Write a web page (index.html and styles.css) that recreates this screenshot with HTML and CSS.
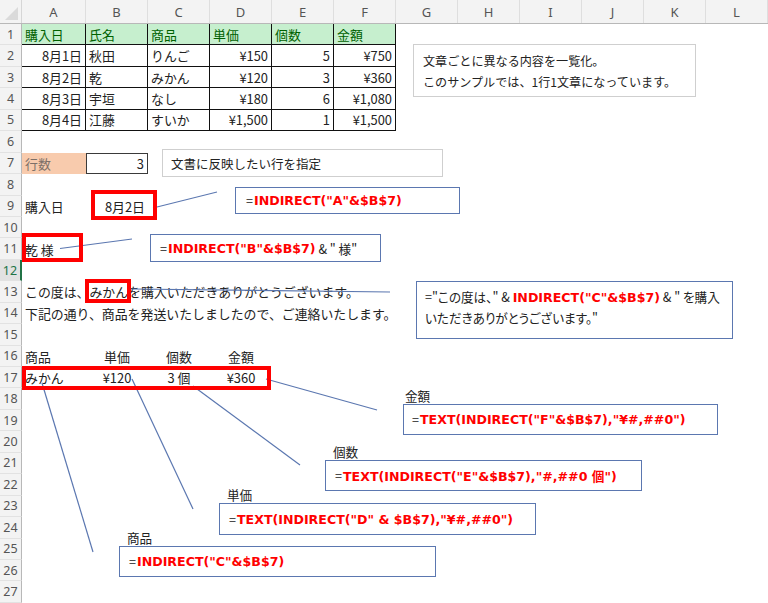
FILE: index.html
```html
<!DOCTYPE html>
<html lang="ja">
<head>
<meta charset="utf-8">
<title>INDIRECT sample</title>
<link rel="stylesheet" href="styles.css">
</head>
<body>
<div class="sheet">
  <div class="colhead">
    <div class="corner"></div>
    <div class="ch">A</div><div class="ch">B</div><div class="ch">C</div><div class="ch">D</div><div class="ch">E</div><div class="ch">F</div>
    <div class="ch">G</div><div class="ch">H</div><div class="ch">I</div><div class="ch">J</div><div class="ch">K</div><div class="ch">L</div>
  </div>
  <div class="row">
    <div class="rh">1</div>
    <div class="c t th">購入日</div><div class="c t th">氏名</div><div class="c t th">商品</div><div class="c t th">単価</div><div class="c t th">個数</div><div class="c t th">金額</div>
  </div>
  <div class="row">
    <div class="rh">2</div>
    <div class="c t r">8月1日</div><div class="c t">秋田</div><div class="c t">りんご</div><div class="c t r">¥150</div><div class="c t r">5</div><div class="c t r">¥750</div>
  </div>
  <div class="row">
    <div class="rh">3</div>
    <div class="c t r">8月2日</div><div class="c t">乾</div><div class="c t">みかん</div><div class="c t r">¥120</div><div class="c t r">3</div><div class="c t r">¥360</div>
  </div>
  <div class="row">
    <div class="rh">4</div>
    <div class="c t r">8月3日</div><div class="c t">宇垣</div><div class="c t">なし</div><div class="c t r">¥180</div><div class="c t r">6</div><div class="c t r">¥1,080</div>
  </div>
  <div class="row">
    <div class="rh">5</div>
    <div class="c t r">8月4日</div><div class="c t">江藤</div><div class="c t">すいか</div><div class="c t r">¥1,500</div><div class="c t r">1</div><div class="c t r">¥1,500</div>
  </div>
  <div class="row"><div class="rh">6</div></div>
  <div class="row">
    <div class="rh">7</div>
    <div class="c inp">行数</div><div class="c r inpv">3</div>
  </div>
  <div class="row"><div class="rh">8</div></div>
  <div class="row">
    <div class="rh">9</div>
    <div class="c">購入日</div><div class="c r">8月2日</div>
  </div>
  <div class="row"><div class="rh">10</div></div>
  <div class="row">
    <div class="rh">11</div>
    <div class="c">乾 様</div>
  </div>
  <div class="row"><div class="rh sel">12</div><div class="c active"></div></div>
  <div class="row">
    <div class="rh">13</div>
    <div class="c span">この度は、みかんを購入いただきありがとうございます。</div>
  </div>
  <div class="row">
    <div class="rh">14</div>
    <div class="c span">下記の通り、商品を発送いたしましたので、ご連絡いたします。</div>
  </div>
  <div class="row"><div class="rh">15</div></div>
  <div class="row">
    <div class="rh">16</div>
    <div class="c">商品</div><div class="c m">単価</div><div class="c m">個数</div><div class="c m">金額</div>
  </div>
  <div class="row">
    <div class="rh">17</div>
    <div class="c">みかん</div><div class="c m">¥120</div><div class="c m">3 個</div><div class="c m">¥360</div>
  </div>
  <div class="row"><div class="rh">18</div></div>
  <div class="row"><div class="rh">19</div></div>
  <div class="row"><div class="rh">20</div></div>
  <div class="row"><div class="rh">21</div></div>
  <div class="row"><div class="rh">22</div></div>
  <div class="row"><div class="rh">23</div></div>
  <div class="row"><div class="rh">24</div></div>
  <div class="row"><div class="rh">25</div></div>
  <div class="row"><div class="rh">26</div></div>
  <div class="row"><div class="rh">27</div></div>
</div>

<div class="overlay">
  <svg class="lines" width="768" height="603" viewBox="0 0 768 603">
    <g stroke="#5b77b0" stroke-width="1.2" fill="none">
      <line x1="153" y1="208" x2="217" y2="192"/>
      <line x1="60" y1="248.5" x2="132" y2="239"/>
      <line x1="131" y1="289" x2="390" y2="292"/>
      <line x1="266" y1="379" x2="377" y2="410"/>
      <line x1="193" y1="386" x2="300" y2="465"/>
      <line x1="132" y1="379" x2="193" y2="509"/>
      <line x1="42" y1="383" x2="93" y2="552"/>
    </g>
  </svg>

  <div class="note n1">
    <div>文章ごとに異なる内容を一覧化。</div>
    <div>このサンプルでは、1行1文章になっています。</div>
  </div>
  <div class="note n2">文書に反映したい行を指定</div>

  <div class="redbox rb1"></div>
  <div class="redbox rb2"></div>
  <div class="redbox rb3"></div>
  <div class="redbox rb4"></div>

  <div class="fbox fb1"><span class="eq">=</span><span class="fx">INDIRECT("A"&amp;$B$7)</span></div>
  <div class="fbox fb2"><span class="eq">=</span><span class="fx">INDIRECT("B"&amp;$B$7)</span><span class="tail">&nbsp;&amp; " 様"</span></div>
  <div class="fbox fb3"><div class="multi">="この度は、" &amp; <span class="fx">INDIRECT("C"&amp;$B$7)</span> &amp; " を購入<br>いただきありがとうございます。"</div></div>

  <div class="lg lg4">
    <div class="lbl">金額</div>
    <div class="fbox"><span class="eq">=</span><span class="fx">TEXT(INDIRECT("F"&amp;$B$7),"¥#,##0")</span></div>
  </div>
  <div class="lg lg5">
    <div class="lbl">個数</div>
    <div class="fbox"><span class="eq">=</span><span class="fx">TEXT(INDIRECT("E"&amp;$B$7),"#,##0 個")</span></div>
  </div>
  <div class="lg lg6">
    <div class="lbl">単価</div>
    <div class="fbox"><span class="eq">=</span><span class="fx">TEXT(INDIRECT("D" &amp; $B$7),"¥#,##0")</span></div>
  </div>
  <div class="lg lg7">
    <div class="lbl">商品</div>
    <div class="fbox"><span class="eq">=</span><span class="fx">INDIRECT("C"&amp;$B$7)</span></div>
  </div>
</div>
</body>
</html>
```
FILE: styles.css
```css
* { box-sizing: border-box; }
html, body { margin: 0; padding: 0; }
body {
  width: 768px;
  height: 603px;
  overflow: hidden;
  position: relative;
  background: #fff;
  font-family: "Noto Sans CJK JP", sans-serif;
  font-size: 12.6px;
  color: #222;
}

.sheet { display: flex; flex-direction: column; }

.colhead, .row {
  display: grid;
  grid-template-columns: 22px 64px repeat(11, 62px);
}

.colhead {
  height: 24px;
  background: #f3f3f3;
  border-bottom: 1px solid #b8b8b8;
}

.corner {
  position: relative;
  border-right: 1px solid #d6d6d6;
}
.corner::after {
  content: "";
  position: absolute;
  right: 3px;
  bottom: 3px;
  border-left: 13px solid transparent;
  border-bottom: 13px solid #dadada;
}

.ch {
  display: flex;
  align-items: center;
  justify-content: center;
  border-right: 1px solid #dedede;
  font-family: "Noto Sans", sans-serif;
  font-size: 13px;
  color: #555;
}

.row { height: 21.44px; }

.rh {
  display: flex;
  align-items: center;
  justify-content: center;
  background: #f3f3f3;
  border-right: 1px solid #b8b8b8;
  border-bottom: 1px solid #e2e2e2;
  font-family: "Noto Sans", sans-serif;
  font-size: 12.5px;
  color: #555;
}
.rh.sel {
  background: #e2e2e2;
  color: #217346;
  border-right: 2px solid #217346;
}

.c {
  display: flex;
  align-items: center;
  padding: 0 3px;
  white-space: nowrap;
  font-size: 12.9px;
}
.r { justify-content: flex-end; }
.m { justify-content: center; }
.span { grid-column: span 8; }

.t {
  border-right: 1px solid #111;
  border-bottom: 1px solid #111;
}
.th {
  background: #c6efce;
  color: #006100;
}

.inp {
  background: #f8cbad;
  color: #7d7068;
}
.inpv {
  border: 1.5px solid #3a3a3a;
  color: #222;
}

/* overlay shapes */
.overlay {
  position: absolute;
  left: 0;
  top: 0;
  width: 768px;
  height: 603px;
}
.lines { position: absolute; left: 0; top: 0; }

.note {
  position: absolute;
  background: #fff;
  border: 1.5px solid #cfcfcf;
  color: #222;
}
.n1 {
  left: 413px;
  top: 44px;
  width: 283px;
  height: 53px;
  padding: 5px 0 0 9px;
  line-height: 21px;
  font-size: 12.1px;
}
.n2 {
  left: 162px;
  top: 149px;
  width: 281px;
  height: 28px;
  padding-left: 8px;
  display: flex;
  align-items: center;
  font-size: 12.5px;
}

.redbox {
  position: absolute;
  border: 4px solid #ff0000;
}
.rb1 { left: 91px; top: 190px; width: 66px; height: 30px; }
.rb2 { left: 22px; top: 233px; width: 61px; height: 29px; }
.rb3 { left: 85px; top: 279px; width: 46px; height: 24px; }
.rb4 { left: 22px; top: 366px; width: 249px; height: 23.5px; }

.fbox {
  position: absolute;
  display: flex;
  align-items: center;
  background: #fff;
  border: 1.5px solid #5b77b0;
  padding-left: 9px;
  white-space: nowrap;
  color: #222;
}
.fb1 { left: 235px; top: 187px; width: 225px; height: 27px; padding-left: 10px; }
.fb2 { left: 150px; top: 234px; width: 231px; height: 28px; }
.fb3 {
  left: 416px;
  top: 281px;
  width: 317px;
  height: 58px;
  align-items: flex-start;
  padding-top: 5px;
  padding-left: 8px;
}
.multi {
  line-height: 20px;
  font-feature-settings: "palt";
  font-size: 12.6px;
}

.eq { margin-right: 1px; }
.fx {
  font-family: "DejaVu Sans", "Noto Sans CJK JP", sans-serif;
  font-weight: bold;
  font-size: 12.6px;
  color: #ff0000;
}
.tail { font-size: 12.6px; }

.lg {
  position: absolute;
  display: flex;
  flex-direction: column;
}
.lg .lbl {
  height: 17px;
  line-height: 17px;
  padding-left: 8px;
}
.lg .fbox {
  position: static;
  height: 31px;
}
.lg4 { left: 403px; top: 387px; }
.lg4 .lbl { padding-left: 2px; }
.lg4 .fbox { width: 315px; padding-left: 8px; }
.lg5 { left: 325px; top: 443px; }
.lg5 .fbox { width: 317px; }
.lg6 { left: 219px; top: 486px; }
.lg6 .fbox { width: 317px; height: 32px; }
.lg7 { left: 119px; top: 529px; }
.lg7 .fbox { width: 317px; }
```
